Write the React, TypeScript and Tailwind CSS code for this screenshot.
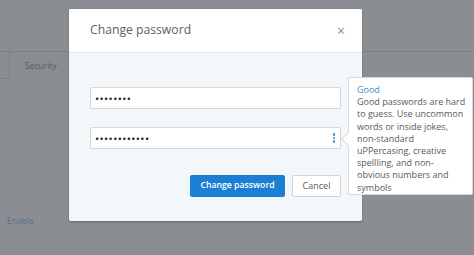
import React from "react";

const font = { fontFamily: '"Open Sans", "Noto Sans", sans-serif' };

const Dots = ({ count }: { count: number }) => (
  <span className="text-[11px] leading-none tracking-[0.4px] text-[#222]">{"•".repeat(count)}</span>
);

const tipLines = [
  "Good passwords are hard",
  "to guess. Use uncommon",
  "words or inside jokes,",
  "non-standard",
  "uPPercasing, creative",
  "spellling, and non-",
  "obvious numbers and",
  "symbols",
];

const App: React.FC = () => {
  return (
    <div className="relative w-[474px] h-[255px] overflow-hidden bg-[#8a8e92]" style={font}>
      {/* page behind the overlay */}
      <div className="pt-[51px]">
        <div className="flex h-[28px] border-t border-[#7d8185]">
          <div className="w-[10px] border-r border-b border-[#7d8185]" />
          <div className="pl-[15px] pt-[8px] text-[8.5px] text-[#55595d]">Security</div>
        </div>
        <div className="pl-[7px] pt-[136px] text-[8.5px] text-[#5b6d8a]">Enable</div>
      </div>

      {/* modal */}
      <div className="absolute left-[69px] top-[9px] w-[293px] h-[212px] flex flex-col rounded-[2px] bg-[#f4f7fa] shadow-[0_1px_2px_rgba(0,0,0,0.25)]">
        <div className="flex h-[44px] items-center justify-between border-b border-[#e4e8ec] bg-white pl-[21px] pr-[17px] rounded-t-[2px]">
          <h2 className="text-[12.2px] text-[#5a5f64]">Change password</h2>
          <span className="text-[14px] leading-none text-[#8a8e92]">×</span>
        </div>

        <div className="flex flex-col gap-[18px] px-[21px] pt-[34px]">
          <div className="flex h-[22px] w-[251px] items-center rounded-[2px] border border-[#d3d8dd] bg-white pl-[4px]">
            <Dots count={8} />
          </div>
          <div className="flex h-[22px] w-[251px] items-center justify-between rounded-[2px] border border-[#d3d8dd] bg-white pl-[4px] pr-[5px]">
            <Dots count={12} />
            <span className="flex flex-col gap-[1px]">
              <span className="h-[2.5px] w-[2.5px] rounded-full bg-[#3d8fc6]" />
              <span className="h-[2.5px] w-[2.5px] rounded-full bg-[#3d8fc6]" />
              <span className="h-[2.5px] w-[2.5px] rounded-full bg-[#3d8fc6]" />
            </span>
          </div>
        </div>

        <div className="flex justify-end gap-[7px] pr-[21px] pt-[26px]">
          <button className="h-[22px] w-[95px] rounded-[2px] bg-[#1b80d3] text-[8.7px] font-semibold text-white">
            Change password
          </button>
          <button className="h-[22px] w-[49px] rounded-[2px] border border-[#cfd4d9] bg-white text-[9px] text-[#555a5f]">
            Cancel
          </button>
        </div>
      </div>

      {/* strength tooltip */}
      <div className="absolute left-[348px] top-[77px] w-[125px] h-[118px] rounded-[2px] border border-[#d6dadf] bg-white pl-[8px] pt-[6px] text-[9px] leading-[12.2px] text-[#555a5f]">
        <span className="absolute left-[-6px] top-[56px] h-[10px] w-[10px] rotate-45 border-b border-l border-[#d6dadf] bg-white" />
        <div className="text-[#3d8fc6]">Good</div>
        {tipLines.map((line) => (
          <div key={line} className="whitespace-nowrap">
            {line}
          </div>
        ))}
      </div>
    </div>
  );
};

export default App;
